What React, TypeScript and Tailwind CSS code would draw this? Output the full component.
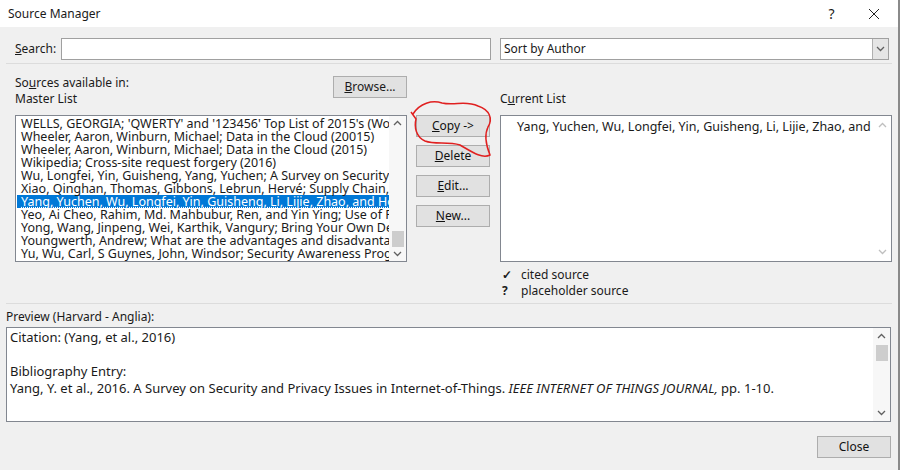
import React from "react";

const rows = [
  "WELLS, GEORGIA; 'QWERTY' and '123456' Top List of 2015's (Worst) Passwords",
  "Wheeler, Aaron, Winburn, Michael; Data  in  the  Cloud (20015)",
  "Wheeler, Aaron, Winburn, Michael; Data in the Cloud (2015)",
  "Wikipedia; Cross-site request forgery (2016)",
  "Wu, Longfei, Yin, Guisheng, Yang, Yuchen; A Survey on Security and Privacy",
  "Xiao, Qinghan, Thomas, Gibbons, Lebrun, Hervé; Supply Chain, The Way",
  "Yang, Yuchen, Wu, Longfei, Yin, Guisheng, Li, Lijie, Zhao, and Hongbin; A Survey",
  "Yeo, Ai Cheo, Rahim, Md. Mahbubur, Ren, and Yin Ying; Use of Persuasive",
  "Yong, Wang, Jinpeng, Wei, Karthik, Vangury; Bring Your Own Device Security",
  "Youngwerth, Andrew; What are the advantages and disadvantages of w",
  "Yu, Wu, Carl, S Guynes, John, Windsor; Security Awareness Programs (2016)",
];

const Btn = ({ children, className = "" }: { children: React.ReactNode; className?: string }) => (
  <div className={`h-[22px] w-[74px] flex items-center justify-center bg-[#e1e1e1] border border-[#adadad] text-[#111] ${className}`}>
    {children}
  </div>
);

const Chev = ({ up }: { up?: boolean }) => (
  <svg width="9" height="6" viewBox="0 0 9 6">
    <path d={up ? "M1 5 L4.5 1.5 L8 5" : "M1 1 L4.5 4.5 L8 1"} fill="none" stroke="#606060" strokeWidth="1.3" />
  </svg>
);

export default function App() {
  return (
    <div
      className="relative w-[900px] h-[470px] bg-[#f0f0f0] text-[12px] text-[#1a1a1a] overflow-hidden border-r-2 border-[#8a8a8a]"
      style={{ fontFamily: "'Noto Sans', 'Open Sans', sans-serif" }}
    >
      {/* title bar */}
      <div className="h-[27px] bg-white flex items-center pl-2">
        <span className="flex-1 text-[12px]">Source Manager</span>
        <span className="w-[45px] text-center text-[14px]">?</span>
        <svg width="12" height="12" viewBox="0 0 12 12" className="mr-[18px] ml-[14px]">
          <path d="M1 1 L11 11 M11 1 L1 11" stroke="#222" strokeWidth="1" />
        </svg>
      </div>

      {/* search row */}
      <div className="flex items-center mt-[11px] pl-[15px] pr-[9px] h-[22px]">
        <span className="w-[46px]"><u>S</u>earch:</span>
        <div className="w-[430px] h-[22px] bg-white border border-[#a0a0a0]" />
        <div className="ml-[9px] flex-1 h-[22px] bg-white border border-[#a0a0a0] flex items-center">
          <span className="flex-1 pl-[3px]">Sort by Author</span>
          <div className="w-[16px] h-[20px] bg-[#e5e5e5] border-l border-[#b0b0b0] flex items-center justify-center">
            <Chev />
          </div>
        </div>
      </div>
      <div className="mx-[6px] mt-[3px] border-t border-[#dcdcdc]" />

      {/* main area */}
      <div className="flex mt-[9px] pl-[15px]">
        <div className="w-[392px]">
          <div className="flex justify-between h-[42px]">
            <div className="leading-[16px] pt-[2px]">
              <div>So<u>u</u>rces available in:</div>
              <div>Master List</div>
            </div>
            <div className="h-[22px] w-[74px] flex items-center justify-center bg-[#e1e1e1] border border-[#adadad] mt-[3px]">
              <u>B</u>rowse...
            </div>
          </div>
          <div className="h-[147px] bg-white border border-[#828790] flex text-[12.5px]">
            <div className="flex-1 overflow-hidden pt-[1px] pl-[1px]">
              {rows.map((r, i) => (
                <div
                  key={i}
                  className={`h-[13px] leading-[13px] whitespace-nowrap pl-[4px] ${i === 6 ? "bg-[#0078d7] text-white underline decoration-dotted" : ""}`}
                >
                  {r}
                </div>
              ))}
            </div>
            <div className="w-[17px] flex flex-col items-center justify-between py-[4px] bg-[#f7f7f7]">
              <Chev up />
              <div className="flex-1" />
              <div className="w-[12px] h-[16px] bg-[#cdcdcd] mb-[4px]" />
              <Chev />
            </div>
          </div>
        </div>

        <div className="w-[74px] ml-[9px] mt-[42px] flex flex-col gap-[8px]">
          <Btn><u>C</u>opy -&gt;</Btn>
          <Btn><u>D</u>elete</Btn>
          <Btn><u>E</u>dit...</Btn>
          <Btn><u>N</u>ew...</Btn>
        </div>

        <div className="w-[392px] ml-[10px]">
          <div className="h-[42px] pt-[18px] leading-[16px]">C<u>u</u>rrent List</div>
          <div className="h-[147px] bg-white border border-[#828790] flex text-[12.5px]">
            <div className="flex-1 pl-[16px] pt-[2px] whitespace-nowrap overflow-hidden">
              Yang, Yuchen, Wu, Longfei, Yin, Guisheng, Li, Lijie, Zhao, and Hongbin; A Survey
            </div>
            <div className="w-[17px] flex flex-col items-center justify-between py-[6px] opacity-40">
              <Chev up />
              <Chev />
            </div>
          </div>
          <div className="mt-[5px] leading-[16px]">
            <div className="flex"><span className="w-[21px] pl-[2px] font-bold">✓</span>cited source</div>
            <div className="flex"><span className="w-[21px] pl-[2px] font-bold">?</span>placeholder source</div>
          </div>
        </div>
      </div>

      <div className="mx-[6px] mt-[4px] border-t border-[#dcdcdc]" />
      <div className="pl-[6px] mt-[5px] leading-[16px]">Preview (Harvard - Anglia):</div>
      <div className="ml-[6px] mr-[7px] mt-[2px] h-[95px] bg-white border border-[#828790] flex text-[13px]">
        <div className="flex-1 pl-[3px] pt-[1px] leading-[17px]">
          <div>Citation:  (Yang, et al., 2016)</div>
          <div className="h-[17px]" />
          <div>Bibliography Entry:</div>
          <div>
            Yang, Y. et al., 2016. A Survey on Security and Privacy Issues in Internet-of-Things.{" "}
            <i>IEEE INTERNET OF THINGS JOURNAL,</i> pp. 1-10.
          </div>
        </div>
        <div className="w-[17px] flex flex-col items-center py-[5px] bg-[#f7f7f7]">
          <Chev up />
          <div className="w-[12px] h-[16px] bg-[#cdcdcd] mt-[6px]" />
          <div className="flex-1" />
          <Chev />
        </div>
      </div>
      <div className="flex justify-end pr-[7px] mt-[14px]">
        <Btn>Close</Btn>
      </div>

      {/* red annotation scribble */}
      <svg className="absolute left-[410px] top-[97px]" width="85" height="62" viewBox="0 0 85 62">
        <path
          d="M3 17 C10 6 22 3 32 6 C45 9 55 3 68 9 C80 13 83 22 78 30 C74 38 76 48 80 58 C72 62 62 55 50 48 C38 44 25 48 15 44 C6 40 4 30 6 22 L1 15"
          fill="none"
          stroke="#e02020"
          strokeWidth="1.5"
        />
      </svg>
    </div>
  );
}
